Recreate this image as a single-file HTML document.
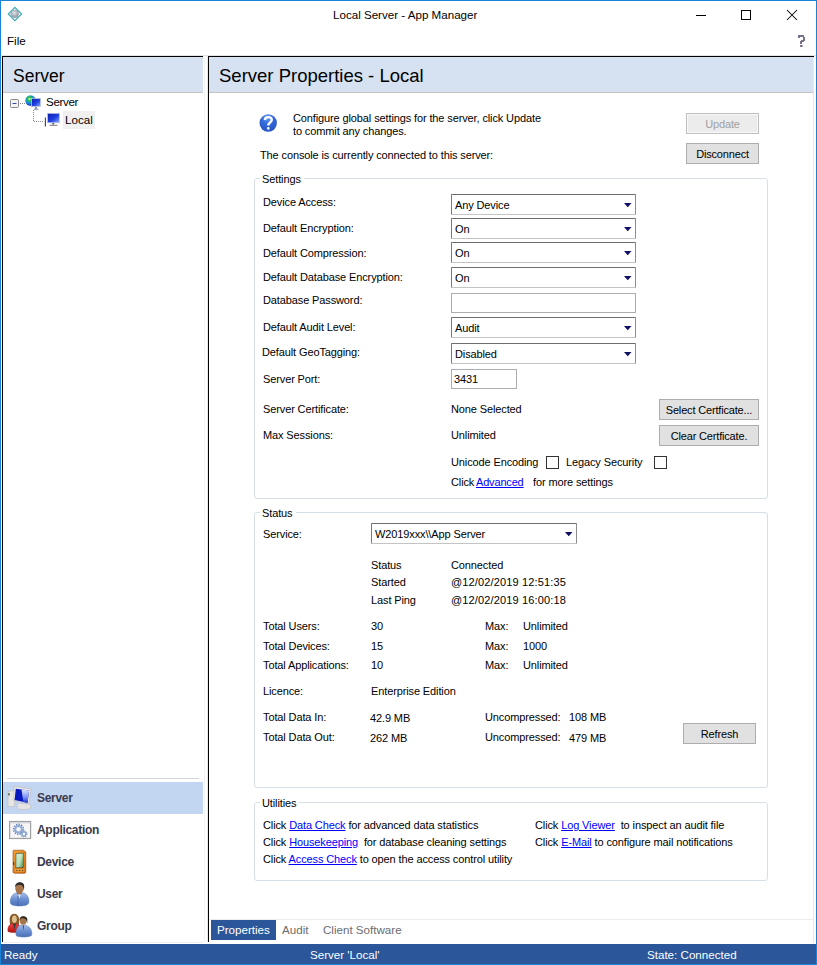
<!DOCTYPE html>
<html><head><meta charset="utf-8"><title>App Manager</title>
<style>html,body{margin:0;padding:0;width:817px;height:965px;overflow:hidden;background:#fff;font-family:'Liberation Sans', sans-serif}</style></head>
<body>
<div style="position:absolute;left:0px;top:0px;width:817px;height:965px;background:#fff"></div>
<div style="position:absolute;left:696px;top:15px;width:10px;height:1px;background:#000"></div>
<div style="position:absolute;left:741px;top:10px;width:10px;height:10px;box-sizing:border-box;border:1px solid #000"></div>
<svg style="position:absolute;left:786px;top:9px" width="12" height="12" viewBox="0 0 12 12"><path d="M1 1 L11 11 M11 1 L1 11" stroke="#000" stroke-width="1.05"/></svg>
<div style="position:absolute;left:0px;top:0px;width:817px;height:965px;box-sizing:border-box;border:1px solid #1883d7;background:transparent"></div>
<div style="position:absolute;left:1px;top:55px;width:815px;height:1px;background:#e3e3e3"></div>
<div style="position:absolute;left:2px;top:56px;width:201px;height:1px;background:#000"></div>
<div style="position:absolute;left:2px;top:56px;width:1px;height:886px;background:#000"></div>
<div style="position:absolute;left:3px;top:57px;width:200px;height:35px;background:#d6e1f1"></div>
<div style="position:absolute;left:3px;top:92px;width:200px;height:1px;background:#c4c4c4"></div>
<div style="position:absolute;left:3px;top:942px;width:200px;height:1px;background:#efefef"></div>
<div style="position:absolute;left:63px;top:111px;width:32px;height:18px;background:#f0f0f0"></div>
<div style="position:absolute;left:7px;top:778px;width:192px;height:1px;background:#d4d4d4"></div>
<div style="position:absolute;left:3px;top:782px;width:200px;height:32px;background:#c2d5f1"></div>
<div style="position:absolute;left:204px;top:56px;width:1px;height:886px;background:#f2f2f2"></div>
<div style="position:absolute;left:207px;top:56px;width:1px;height:886px;background:#e8e8e8"></div>
<div style="position:absolute;left:208px;top:56px;width:606px;height:1px;background:#000"></div>
<div style="position:absolute;left:208px;top:56px;width:1px;height:886px;background:#000"></div>
<div style="position:absolute;left:209px;top:57px;width:604px;height:35px;background:#d6e1f1"></div>
<div style="position:absolute;left:209px;top:92px;width:604px;height:1px;background:#c4c4c4"></div>
<div style="position:absolute;left:813px;top:57px;width:1px;height:886px;background:#e8e8e8"></div>
<div style="position:absolute;left:686px;top:113px;width:73px;height:21px;box-sizing:border-box;background:#ececec;border:1px solid #bfbfbf;box-shadow:inset 0 0 0 1px #f8f8f8"></div>
<div class="t" style="position:absolute;left:686px;top:113px;width:73px;height:21px;text-align:center;font:11px 'Liberation Sans', sans-serif;line-height:23px;letter-spacing:-0.17px;color:#a0a0a0">Update</div>
<div style="position:absolute;left:686px;top:143px;width:73px;height:21px;box-sizing:border-box;background:#e1e1e1;border:1px solid #adadad;"></div>
<div class="t" style="position:absolute;left:686px;top:143px;width:73px;height:21px;text-align:center;font:11px 'Liberation Sans', sans-serif;line-height:23px;letter-spacing:-0.17px;color:#000">Disconnect</div>
<div style="position:absolute;left:254px;top:178px;width:514px;height:321px;box-sizing:border-box;border:1px solid #d5dfe5;border-radius:3px"></div>
<div style="position:absolute;left:260px;top:172px;width:44px;height:12px;background:#fff"></div>
<div style="position:absolute;left:451px;top:194px;width:185px;height:21px;box-sizing:border-box;background:#fff;border:1px solid;border-color:#6e6e6e #8c8c8c #c4c4c4 #7a7a7a;border-radius:1px"></div>
<svg style="position:absolute;left:624px;top:203px" width="8" height="5" viewBox="0 0 8 5"><path d="M0 0 H7.5 L3.75 4.2 Z" fill="#101060"/></svg>
<div style="position:absolute;left:451px;top:218px;width:185px;height:21px;box-sizing:border-box;background:#fff;border:1px solid;border-color:#6e6e6e #8c8c8c #c4c4c4 #7a7a7a;border-radius:1px"></div>
<svg style="position:absolute;left:624px;top:227px" width="8" height="5" viewBox="0 0 8 5"><path d="M0 0 H7.5 L3.75 4.2 Z" fill="#101060"/></svg>
<div style="position:absolute;left:451px;top:242px;width:185px;height:21px;box-sizing:border-box;background:#fff;border:1px solid;border-color:#6e6e6e #8c8c8c #c4c4c4 #7a7a7a;border-radius:1px"></div>
<svg style="position:absolute;left:624px;top:251px" width="8" height="5" viewBox="0 0 8 5"><path d="M0 0 H7.5 L3.75 4.2 Z" fill="#101060"/></svg>
<div style="position:absolute;left:451px;top:267px;width:185px;height:21px;box-sizing:border-box;background:#fff;border:1px solid;border-color:#6e6e6e #8c8c8c #c4c4c4 #7a7a7a;border-radius:1px"></div>
<svg style="position:absolute;left:624px;top:276px" width="8" height="5" viewBox="0 0 8 5"><path d="M0 0 H7.5 L3.75 4.2 Z" fill="#101060"/></svg>
<div style="position:absolute;left:451px;top:293px;width:185px;height:20px;box-sizing:border-box;background:#fff;border:1px solid #abadb3"></div>
<div style="position:absolute;left:451px;top:317px;width:185px;height:21px;box-sizing:border-box;background:#fff;border:1px solid;border-color:#6e6e6e #8c8c8c #c4c4c4 #7a7a7a;border-radius:1px"></div>
<svg style="position:absolute;left:624px;top:326px" width="8" height="5" viewBox="0 0 8 5"><path d="M0 0 H7.5 L3.75 4.2 Z" fill="#101060"/></svg>
<div style="position:absolute;left:451px;top:343px;width:185px;height:21px;box-sizing:border-box;background:#fff;border:1px solid;border-color:#6e6e6e #8c8c8c #c4c4c4 #7a7a7a;border-radius:1px"></div>
<svg style="position:absolute;left:624px;top:352px" width="8" height="5" viewBox="0 0 8 5"><path d="M0 0 H7.5 L3.75 4.2 Z" fill="#101060"/></svg>
<div style="position:absolute;left:451px;top:369px;width:66px;height:20px;box-sizing:border-box;background:#fff;border:1px solid #abadb3"></div>
<div style="position:absolute;left:659px;top:399px;width:100px;height:21px;box-sizing:border-box;background:#e1e1e1;border:1px solid #adadad;"></div>
<div class="t" style="position:absolute;left:659px;top:399px;width:100px;height:21px;text-align:center;font:11px 'Liberation Sans', sans-serif;line-height:23px;letter-spacing:-0.17px;color:#000">Select Certficate...</div>
<div style="position:absolute;left:659px;top:425px;width:100px;height:21px;box-sizing:border-box;background:#e1e1e1;border:1px solid #adadad;"></div>
<div class="t" style="position:absolute;left:659px;top:425px;width:100px;height:21px;text-align:center;font:11px 'Liberation Sans', sans-serif;line-height:23px;letter-spacing:-0.17px;color:#000">Clear Certficate.</div>
<div style="position:absolute;left:546px;top:456px;width:13px;height:13px;box-sizing:border-box;border:1px solid #333;background:#fff"></div>
<div style="position:absolute;left:654px;top:456px;width:13px;height:13px;box-sizing:border-box;border:1px solid #333;background:#fff"></div>
<div style="position:absolute;left:254px;top:512px;width:514px;height:276px;box-sizing:border-box;border:1px solid #d5dfe5;border-radius:3px"></div>
<div style="position:absolute;left:260px;top:506px;width:36px;height:12px;background:#fff"></div>
<div style="position:absolute;left:371px;top:523px;width:206px;height:21px;box-sizing:border-box;background:#fff;border:1px solid;border-color:#6e6e6e #8c8c8c #c4c4c4 #7a7a7a;border-radius:1px"></div>
<svg style="position:absolute;left:565px;top:532px" width="8" height="5" viewBox="0 0 8 5"><path d="M0 0 H7.5 L3.75 4.2 Z" fill="#101060"/></svg>
<div style="position:absolute;left:683px;top:723px;width:73px;height:21px;box-sizing:border-box;background:#e1e1e1;border:1px solid #adadad;"></div>
<div class="t" style="position:absolute;left:683px;top:723px;width:73px;height:21px;text-align:center;font:11px 'Liberation Sans', sans-serif;line-height:23px;letter-spacing:-0.17px;color:#000">Refresh</div>
<div style="position:absolute;left:254px;top:802px;width:514px;height:79px;box-sizing:border-box;border:1px solid #d5dfe5;border-radius:3px"></div>
<div style="position:absolute;left:260px;top:796px;width:39px;height:12px;background:#fff"></div>
<div style="position:absolute;left:209px;top:919px;width:604px;height:1px;background:#ececec"></div>
<div style="position:absolute;left:211px;top:920px;width:65px;height:20px;background:#2b579a"></div>
<div style="position:absolute;left:1px;top:944px;width:815px;height:20px;background:#2b579a"></div>
<svg style="position:absolute;left:0;top:0" width="817" height="965" viewBox="0 0 817 965">
<defs>
<radialGradient id="sph" cx="0.45" cy="0.4" r="0.6"><stop offset="0" stop-color="#e6e9ec"/><stop offset="0.6" stop-color="#aab1b9"/><stop offset="1" stop-color="#8e98a2"/></radialGradient>
<radialGradient id="gl" cx="0.4" cy="0.35" r="0.65"><stop offset="0" stop-color="#e8fff0"/><stop offset="0.25" stop-color="#30c040"/><stop offset="0.6" stop-color="#1a90e0"/><stop offset="1" stop-color="#0a2ac0"/></radialGradient>
<linearGradient id="scr" x1="0" y1="0" x2="1" y2="1"><stop offset="0" stop-color="#0a1ab0"/><stop offset="0.55" stop-color="#2040e0"/><stop offset="1" stop-color="#90b0ff"/></linearGradient>
<linearGradient id="ns" x1="0" y1="0" x2="1" y2="0"><stop offset="0" stop-color="#0a20d0"/><stop offset="0.45" stop-color="#0010b0"/><stop offset="0.5" stop-color="#c8d8ff"/><stop offset="1" stop-color="#5070e0"/></linearGradient>
<linearGradient id="pda" x1="0" y1="0" x2="1" y2="1"><stop offset="0" stop-color="#f7a030"/><stop offset="1" stop-color="#d06a10"/></linearGradient>
<linearGradient id="pdas" x1="0" y1="0" x2="1" y2="1"><stop offset="0" stop-color="#e0f6e0"/><stop offset="0.5" stop-color="#a8d8a8"/><stop offset="1" stop-color="#5a9a60"/></linearGradient>
<linearGradient id="body" x1="0" y1="0" x2="0" y2="1"><stop offset="0" stop-color="#a8c0ec"/><stop offset="0.5" stop-color="#6a8ed0"/><stop offset="1" stop-color="#4a70b8"/></linearGradient>
<linearGradient id="rbody" x1="0" y1="0" x2="0" y2="1"><stop offset="0" stop-color="#f04040"/><stop offset="1" stop-color="#b01010"/></linearGradient>
<linearGradient id="hl" x1="0" y1="0" x2="0" y2="1"><stop offset="0" stop-color="#dce6ff"/><stop offset="0.6" stop-color="#7890f0"/><stop offset="1" stop-color="#1a30d0"/></linearGradient>
<radialGradient id="qg" cx="0.45" cy="0.2" r="0.9"><stop offset="0" stop-color="#6aa0ff"/><stop offset="0.4" stop-color="#3468d8"/><stop offset="1" stop-color="#2250c0"/></radialGradient>
</defs>
<!-- app icon -->
<path d="M14.9 7.4 L21.5 14 L14.9 20.6 L8.3 14 Z" fill="#fff" stroke="#3aaab8" stroke-width="1.2"/>
<circle cx="14.7" cy="13.7" r="4.2" fill="url(#sph)"/>
<!-- menu help ? -->
<path d="M798 35 H804 V37 H805 V41 H804 V42 H802 V44 H800 V41 H801 V40 H803 V37 H800 V38 H798 Z" fill="#7a7088"/>
<rect x="800" y="45" width="2.6" height="2" fill="#7a7088"/>
<!-- tree -->
<rect x="10.5" y="99.5" width="8" height="8" rx="1" fill="#f4f4f4" stroke="#8a8a8a"/>
<path d="M12.5 103.5 H16.5" stroke="#2d4ea0" stroke-width="1"/>
<path d="M20 103.5 H25" stroke="#8a8a8a" stroke-dasharray="1 1"/>
<path d="M33.5 110 V121.5 H44" stroke="#8a8a8a" stroke-dasharray="1 1" fill="none"/>
<circle cx="30.5" cy="100.5" r="5.2" fill="url(#gl)"/>
<rect x="31.5" y="98.5" width="9" height="8" fill="url(#scr)" stroke="#b8c4e0" stroke-width="0.8"/>
<rect x="35.2" y="107" width="1.6" height="2" fill="#707888"/>
<rect x="34" y="108.8" width="4.5" height="1" fill="#8090c0"/>
<!-- local monitor -->
<rect x="44.8" y="117.5" width="1.2" height="9" fill="#505050"/>
<rect x="47.5" y="113.3" width="12" height="9.5" fill="url(#scr)" stroke="#c0c8e0" stroke-width="0.8"/>
<rect x="52.2" y="123" width="2" height="1.6" fill="#606060"/>
<rect x="49.5" y="124.8" width="8" height="1.2" fill="#909090"/>
<!-- nav server -->
<path d="M8 791.5 L14.5 790.5 L14.6 806.5 L8 806.7 Z" fill="#e6e6e6" stroke="#b8b8b8" stroke-width="0.6"/>
<rect x="8.3" y="793" width="1.3" height="2.5" fill="#406040"/>
<path d="M17.5 803 L30.5 804.5 L31 808 C28 810 20 810 17 808.5 Z" fill="#e4e4e4" stroke="#b8b8b8" stroke-width="0.5"/>
<path d="M14.2 786.3 L31 789 L29.1 803.2 L13.8 800.4 Z" fill="#e8e8e8" stroke="#b8b8b8" stroke-width="0.6"/>
<path d="M15.8 788.7 L29.1 790.6 L27.5 802.8 L14.6 800 Z" fill="#0818c0"/>
<path d="M21.5 789.5 L29.1 790.6 L27.5 802.8 L23.5 802 C22.5 797 22 793 21.5 789.5 Z" fill="url(#hl)"/>
<!-- nav application -->
<rect x="9.6" y="821.5" width="21" height="17" fill="#f6f6f6" stroke="#a0a0a0" stroke-width="1.2"/>
<rect x="10.2" y="822" width="20" height="1.4" fill="#d4d8e0"/>
<circle cx="18.5" cy="829.3" r="4.9" fill="none" stroke="#6a88b8" stroke-width="1.6" stroke-dasharray="1.4 1.1"/>
<circle cx="18.5" cy="829.3" r="3.3" fill="none" stroke="#8eaad4" stroke-width="2"/>
<circle cx="23.9" cy="834" r="2.9" fill="none" stroke="#6a88b8" stroke-width="1.2" stroke-dasharray="1.1 0.9"/>
<circle cx="23.9" cy="834" r="1.9" fill="#f6f6f6" stroke="#8eaad4" stroke-width="1.3"/>
<!-- nav device -->
<path d="M13.5 850.2 H23.5 L25.8 852 V872.5 L24.6 873.3 H14.4 L13 872.5 V851 Z" fill="url(#pda)" stroke="#8a4a10" stroke-width="0.6"/>
<rect x="13.2" y="862" width="1" height="3" fill="#303030"/>
<path d="M16 853.5 L23.4 853.2 L23.2 867.5 L15.8 867.8 Z" fill="url(#pdas)" stroke="#404838" stroke-width="0.6"/>
<path d="M19 854 L22.5 854 L20 867 L16.5 867 Z" fill="#ffffff" opacity="0.25"/>
<rect x="15" y="869" width="9.5" height="2.8" rx="1" fill="#e8a040"/>
<circle cx="16.8" cy="870.4" r="0.7" fill="#604020"/><circle cx="19.7" cy="870.4" r="0.7" fill="#604020"/><circle cx="22.6" cy="870.4" r="0.7" fill="#604020"/>
<!-- nav user -->
<path d="M10.3 902.5 C10 897 13 893.2 17 892.8 L22.5 892.8 C26.5 893.2 29.2 897 28.9 902 C28.7 905 25 906 19.5 906 C14 906 10.5 905 10.3 902.5 Z" fill="url(#body)" stroke="#5a7ab8" stroke-width="0.5"/>
<path d="M18.3 894.5 L20.6 894.5 L19.5 898.5 Z" fill="#f4f4f4"/>
<path d="M18 896 V905.5" stroke="#4a68a8" stroke-width="0.7"/>
<path d="M16 891 L22.5 891 L21.5 894.3 L17.5 894.3 Z" fill="#9a6a44"/>
<ellipse cx="19.5" cy="888" rx="4.3" ry="5.4" fill="#a8764c"/>
<path d="M15.2 887 C14.5 881 24.5 880.5 24.2 886 L24 890.5 C23.5 888.5 23.2 885.5 21 885 C18.5 884.5 16.5 885 15.2 887 Z" fill="#2a2a2a"/>
<!-- nav group: woman -->
<path d="M10.2 925 C9 918.5 9.5 914 14.2 913.8 C19 914 19.8 918.5 18.8 925 Z" fill="#8a5a2a"/>
<path d="M8 931.5 C7.2 927.5 9 924.5 12 923.8 L16.5 923.8 C19.5 924.5 21 927.5 20.5 931 C17 933 11 933 8 931.5 Z" fill="url(#rbody)" stroke="#901010" stroke-width="0.4"/>
<path d="M13 923.8 L16 923.8 L14.5 929 Z" fill="#244040"/>
<ellipse cx="14.4" cy="919.3" rx="2.4" ry="3.7" fill="#dcc090"/>
<!-- nav group: man -->
<path d="M16.5 936 C15 933 16 928 19.5 925.5 L22 925 L25 925 L27.5 926 C31.5 928 32.5 933 31.5 935.5 C28.5 937.5 20 937.5 16.5 936 Z" fill="url(#body)" stroke="#5a7ab8" stroke-width="0.5"/>
<path d="M22.6 925.5 L24 925.5 L23.5 931 Z" fill="#4a4a3a"/>
<ellipse cx="23.2" cy="920.5" rx="3.5" ry="4.2" fill="#a8764c"/>
<path d="M19.6 920.5 C19 915.5 26.5 915 27.3 919 L27.3 923.5 C26.8 921.5 26.5 918.6 24 918.4 C21.7 918.1 20.3 918.6 19.6 920.5 Z" fill="#2a2a2a"/>
<!-- question circle -->
<circle cx="268.2" cy="123" r="8.7" fill="url(#qg)"/>
<path d="M264.9 120 C264.9 116.4 271.8 116.2 271.8 119.8 C271.8 122.3 268.3 122.5 268.3 125.6" fill="none" stroke="#fff" stroke-width="2.3"/>
<circle cx="268.3" cy="128.4" r="1.3" fill="#fff"/>
</svg>
<div style="position:absolute;left:0px;top:0px;width:1px;height:965px;background:#1883d7"></div>
<div style="position:absolute;left:816px;top:0px;width:1px;height:965px;background:#1883d7"></div>
<div style="position:absolute;left:0px;top:964px;width:817px;height:1px;background:#1883d7"></div>
<div style="position:absolute;left:0px;top:0px;width:817px;height:1px;background:#1883d7"></div>
<div class="t" style="position:absolute;left:333px;top:9px;font:normal 11.6px 'Liberation Sans', sans-serif;line-height:1;letter-spacing:0px;color:#000;white-space:pre;">Local Server - App Manager</div>
<div class="t" style="position:absolute;left:7px;top:35px;font:normal 11.6px 'Liberation Sans', sans-serif;line-height:1;letter-spacing:0px;color:#000;white-space:pre;">File</div>
<div class="t" style="position:absolute;left:13px;top:68px;font:normal 17.5px 'Liberation Sans', sans-serif;line-height:1;letter-spacing:0px;color:#000;white-space:pre;">Server</div>
<div class="t" style="position:absolute;left:46px;top:96px;font:normal 11.6px 'Liberation Sans', sans-serif;line-height:1;letter-spacing:-0.35px;color:#000;white-space:pre;">Server</div>
<div class="t" style="position:absolute;left:65px;top:114px;font:normal 11.6px 'Liberation Sans', sans-serif;line-height:1;letter-spacing:0px;color:#000;white-space:pre;">Local</div>
<div class="t" style="position:absolute;left:37px;top:792px;font:bold 12px 'Liberation Sans', sans-serif;line-height:1;letter-spacing:-0.3px;color:#3a3a4a;white-space:pre;">Server</div>
<div class="t" style="position:absolute;left:37px;top:824px;font:bold 12px 'Liberation Sans', sans-serif;line-height:1;letter-spacing:-0.3px;color:#3a3a4a;white-space:pre;">Application</div>
<div class="t" style="position:absolute;left:37px;top:856px;font:bold 12px 'Liberation Sans', sans-serif;line-height:1;letter-spacing:-0.3px;color:#3a3a4a;white-space:pre;">Device</div>
<div class="t" style="position:absolute;left:37px;top:888px;font:bold 12px 'Liberation Sans', sans-serif;line-height:1;letter-spacing:-0.3px;color:#3a3a4a;white-space:pre;">User</div>
<div class="t" style="position:absolute;left:37px;top:920px;font:bold 12px 'Liberation Sans', sans-serif;line-height:1;letter-spacing:-0.3px;color:#3a3a4a;white-space:pre;">Group</div>
<div class="t" style="position:absolute;left:219px;top:67px;font:normal 18.5px 'Liberation Sans', sans-serif;line-height:1;letter-spacing:0px;color:#000;white-space:pre;">Server Properties - Local</div>
<div class="t" style="position:absolute;left:293px;top:113px;font:normal 11px 'Liberation Sans', sans-serif;line-height:1;letter-spacing:-0.12px;color:#000;white-space:pre;">Configure global settings for the server, click Update</div>
<div class="t" style="position:absolute;left:293px;top:126px;font:normal 11px 'Liberation Sans', sans-serif;line-height:1;letter-spacing:-0.12px;color:#000;white-space:pre;">to commit any changes.</div>
<div class="t" style="position:absolute;left:260px;top:150px;font:normal 11px 'Liberation Sans', sans-serif;line-height:1;letter-spacing:-0.12px;color:#000;white-space:pre;">The console is currently connected to this server:</div>
<div class="t" style="position:absolute;left:262px;top:174px;font:normal 11px 'Liberation Sans', sans-serif;line-height:1;letter-spacing:-0.12px;color:#000;white-space:pre;">Settings</div>
<div class="t" style="position:absolute;left:263px;top:197px;font:normal 11px 'Liberation Sans', sans-serif;line-height:1;letter-spacing:-0.12px;color:#000;white-space:pre;">Device Access:</div>
<div class="t" style="position:absolute;left:263px;top:223px;font:normal 11px 'Liberation Sans', sans-serif;line-height:1;letter-spacing:-0.12px;color:#000;white-space:pre;">Default Encryption:</div>
<div class="t" style="position:absolute;left:263px;top:248px;font:normal 11px 'Liberation Sans', sans-serif;line-height:1;letter-spacing:-0.12px;color:#000;white-space:pre;">Default Compression:</div>
<div class="t" style="position:absolute;left:263px;top:272px;font:normal 11px 'Liberation Sans', sans-serif;line-height:1;letter-spacing:-0.12px;color:#000;white-space:pre;">Default Database Encryption:</div>
<div class="t" style="position:absolute;left:263px;top:295px;font:normal 11px 'Liberation Sans', sans-serif;line-height:1;letter-spacing:-0.12px;color:#000;white-space:pre;">Database Password:</div>
<div class="t" style="position:absolute;left:263px;top:322px;font:normal 11px 'Liberation Sans', sans-serif;line-height:1;letter-spacing:-0.12px;color:#000;white-space:pre;">Default Audit Level:</div>
<div class="t" style="position:absolute;left:262px;top:347px;font:normal 11px 'Liberation Sans', sans-serif;line-height:1;letter-spacing:-0.12px;color:#000;white-space:pre;">Default GeoTagging:</div>
<div class="t" style="position:absolute;left:263px;top:374px;font:normal 11px 'Liberation Sans', sans-serif;line-height:1;letter-spacing:-0.12px;color:#000;white-space:pre;">Server Port:</div>
<div class="t" style="position:absolute;left:263px;top:404px;font:normal 11px 'Liberation Sans', sans-serif;line-height:1;letter-spacing:-0.12px;color:#000;white-space:pre;">Server Certificate:</div>
<div class="t" style="position:absolute;left:263px;top:430px;font:normal 11px 'Liberation Sans', sans-serif;line-height:1;letter-spacing:-0.12px;color:#000;white-space:pre;">Max Sessions:</div>
<div class="t" style="position:absolute;left:455px;top:200px;font:normal 11px 'Liberation Sans', sans-serif;line-height:1;letter-spacing:-0.12px;color:#000;white-space:pre;">Any Device</div>
<div class="t" style="position:absolute;left:455px;top:224px;font:normal 11px 'Liberation Sans', sans-serif;line-height:1;letter-spacing:-0.12px;color:#000;white-space:pre;">On</div>
<div class="t" style="position:absolute;left:455px;top:248px;font:normal 11px 'Liberation Sans', sans-serif;line-height:1;letter-spacing:-0.12px;color:#000;white-space:pre;">On</div>
<div class="t" style="position:absolute;left:455px;top:273px;font:normal 11px 'Liberation Sans', sans-serif;line-height:1;letter-spacing:-0.12px;color:#000;white-space:pre;">On</div>
<div class="t" style="position:absolute;left:455px;top:323px;font:normal 11px 'Liberation Sans', sans-serif;line-height:1;letter-spacing:-0.12px;color:#000;white-space:pre;">Audit</div>
<div class="t" style="position:absolute;left:455px;top:349px;font:normal 11px 'Liberation Sans', sans-serif;line-height:1;letter-spacing:-0.12px;color:#000;white-space:pre;">Disabled</div>
<div class="t" style="position:absolute;left:454px;top:374px;font:normal 11px 'Liberation Sans', sans-serif;line-height:1;letter-spacing:-0.12px;color:#000;white-space:pre;">3431</div>
<div class="t" style="position:absolute;left:451px;top:404px;font:normal 11px 'Liberation Sans', sans-serif;line-height:1;letter-spacing:-0.12px;color:#000;white-space:pre;">None Selected</div>
<div class="t" style="position:absolute;left:451px;top:430px;font:normal 11px 'Liberation Sans', sans-serif;line-height:1;letter-spacing:-0.12px;color:#000;white-space:pre;">Unlimited</div>
<div class="t" style="position:absolute;left:451px;top:457px;font:normal 11px 'Liberation Sans', sans-serif;line-height:1;letter-spacing:-0.12px;color:#000;white-space:pre;">Unicode Encoding</div>
<div class="t" style="position:absolute;left:566px;top:457px;font:normal 11px 'Liberation Sans', sans-serif;line-height:1;letter-spacing:-0.12px;color:#000;white-space:pre;">Legacy Security</div>
<div class="t" style="position:absolute;left:451px;top:477px;font:normal 11px 'Liberation Sans', sans-serif;line-height:1;letter-spacing:-0.12px;color:#000;white-space:pre;">Click</div>
<div class="t" style="position:absolute;left:476px;top:477px;font:normal 11px 'Liberation Sans', sans-serif;line-height:1;letter-spacing:-0.17px;color:#0000ff;white-space:pre;text-decoration:underline">Advanced</div>
<div class="t" style="position:absolute;left:533px;top:477px;font:normal 11px 'Liberation Sans', sans-serif;line-height:1;letter-spacing:-0.12px;color:#000;white-space:pre;">for more settings</div>
<div class="t" style="position:absolute;left:262px;top:508px;font:normal 11px 'Liberation Sans', sans-serif;line-height:1;letter-spacing:-0.12px;color:#000;white-space:pre;">Status</div>
<div class="t" style="position:absolute;left:263px;top:529px;font:normal 11px 'Liberation Sans', sans-serif;line-height:1;letter-spacing:-0.12px;color:#000;white-space:pre;">Service:</div>
<div class="t" style="position:absolute;left:375px;top:529px;font:normal 11px 'Liberation Sans', sans-serif;line-height:1;letter-spacing:-0.12px;color:#000;white-space:pre;">W2019xxx\\App Server</div>
<div class="t" style="position:absolute;left:371px;top:560px;font:normal 11px 'Liberation Sans', sans-serif;line-height:1;letter-spacing:-0.12px;color:#000;white-space:pre;">Status</div>
<div class="t" style="position:absolute;left:451px;top:560px;font:normal 11px 'Liberation Sans', sans-serif;line-height:1;letter-spacing:-0.12px;color:#000;white-space:pre;">Connected</div>
<div class="t" style="position:absolute;left:371px;top:577px;font:normal 11px 'Liberation Sans', sans-serif;line-height:1;letter-spacing:-0.12px;color:#000;white-space:pre;">Started</div>
<div class="t" style="position:absolute;left:451px;top:577px;font:normal 11px 'Liberation Sans', sans-serif;line-height:1;letter-spacing:0.15px;color:#000;white-space:pre;">@12/02/2019 12:51:35</div>
<div class="t" style="position:absolute;left:371px;top:595px;font:normal 11px 'Liberation Sans', sans-serif;line-height:1;letter-spacing:-0.12px;color:#000;white-space:pre;">Last Ping</div>
<div class="t" style="position:absolute;left:451px;top:595px;font:normal 11px 'Liberation Sans', sans-serif;line-height:1;letter-spacing:0.15px;color:#000;white-space:pre;">@12/02/2019 16:00:18</div>
<div class="t" style="position:absolute;left:263px;top:621px;font:normal 11px 'Liberation Sans', sans-serif;line-height:1;letter-spacing:-0.12px;color:#000;white-space:pre;">Total Users:</div>
<div class="t" style="position:absolute;left:371px;top:621px;font:normal 11px 'Liberation Sans', sans-serif;line-height:1;letter-spacing:-0.12px;color:#000;white-space:pre;">30</div>
<div class="t" style="position:absolute;left:485px;top:621px;font:normal 11px 'Liberation Sans', sans-serif;line-height:1;letter-spacing:-0.12px;color:#000;white-space:pre;">Max:</div>
<div class="t" style="position:absolute;left:523px;top:621px;font:normal 11px 'Liberation Sans', sans-serif;line-height:1;letter-spacing:-0.12px;color:#000;white-space:pre;">Unlimited</div>
<div class="t" style="position:absolute;left:263px;top:641px;font:normal 11px 'Liberation Sans', sans-serif;line-height:1;letter-spacing:-0.12px;color:#000;white-space:pre;">Total Devices:</div>
<div class="t" style="position:absolute;left:371px;top:641px;font:normal 11px 'Liberation Sans', sans-serif;line-height:1;letter-spacing:-0.12px;color:#000;white-space:pre;">15</div>
<div class="t" style="position:absolute;left:485px;top:641px;font:normal 11px 'Liberation Sans', sans-serif;line-height:1;letter-spacing:-0.12px;color:#000;white-space:pre;">Max:</div>
<div class="t" style="position:absolute;left:523px;top:641px;font:normal 11px 'Liberation Sans', sans-serif;line-height:1;letter-spacing:-0.12px;color:#000;white-space:pre;">1000</div>
<div class="t" style="position:absolute;left:263px;top:660px;font:normal 11px 'Liberation Sans', sans-serif;line-height:1;letter-spacing:-0.12px;color:#000;white-space:pre;">Total Applications:</div>
<div class="t" style="position:absolute;left:371px;top:660px;font:normal 11px 'Liberation Sans', sans-serif;line-height:1;letter-spacing:-0.12px;color:#000;white-space:pre;">10</div>
<div class="t" style="position:absolute;left:485px;top:660px;font:normal 11px 'Liberation Sans', sans-serif;line-height:1;letter-spacing:-0.12px;color:#000;white-space:pre;">Max:</div>
<div class="t" style="position:absolute;left:523px;top:660px;font:normal 11px 'Liberation Sans', sans-serif;line-height:1;letter-spacing:-0.12px;color:#000;white-space:pre;">Unlimited</div>
<div class="t" style="position:absolute;left:263px;top:686px;font:normal 11px 'Liberation Sans', sans-serif;line-height:1;letter-spacing:-0.12px;color:#000;white-space:pre;">Licence:</div>
<div class="t" style="position:absolute;left:371px;top:686px;font:normal 11px 'Liberation Sans', sans-serif;line-height:1;letter-spacing:-0.12px;color:#000;white-space:pre;">Enterprise Edition</div>
<div class="t" style="position:absolute;left:263px;top:712px;font:normal 11px 'Liberation Sans', sans-serif;line-height:1;letter-spacing:-0.12px;color:#000;white-space:pre;">Total Data In:</div>
<div class="t" style="position:absolute;left:370px;top:713px;font:normal 11px 'Liberation Sans', sans-serif;line-height:1;letter-spacing:-0.12px;color:#000;white-space:pre;">42.9 MB</div>
<div class="t" style="position:absolute;left:485px;top:712px;font:normal 11px 'Liberation Sans', sans-serif;line-height:1;letter-spacing:-0.12px;color:#000;white-space:pre;">Uncompressed:</div>
<div class="t" style="position:absolute;left:569px;top:712px;font:normal 11px 'Liberation Sans', sans-serif;line-height:1;letter-spacing:-0.12px;color:#000;white-space:pre;">108 MB</div>
<div class="t" style="position:absolute;left:263px;top:732px;font:normal 11px 'Liberation Sans', sans-serif;line-height:1;letter-spacing:-0.12px;color:#000;white-space:pre;">Total Data Out:</div>
<div class="t" style="position:absolute;left:370px;top:733px;font:normal 11px 'Liberation Sans', sans-serif;line-height:1;letter-spacing:-0.12px;color:#000;white-space:pre;">262 MB</div>
<div class="t" style="position:absolute;left:485px;top:732px;font:normal 11px 'Liberation Sans', sans-serif;line-height:1;letter-spacing:-0.12px;color:#000;white-space:pre;">Uncompressed:</div>
<div class="t" style="position:absolute;left:569px;top:733px;font:normal 11px 'Liberation Sans', sans-serif;line-height:1;letter-spacing:-0.12px;color:#000;white-space:pre;">479 MB</div>
<div class="t" style="position:absolute;left:262px;top:798px;font:normal 11px 'Liberation Sans', sans-serif;line-height:1;letter-spacing:-0.12px;color:#000;white-space:pre;">Utilities</div>
<div class="t" style="position:absolute;left:263px;top:820px;font:normal 11px 'Liberation Sans', sans-serif;line-height:1;letter-spacing:-0.12px;color:#000;white-space:pre;">Click <span style="color:#0000ff;text-decoration:underline">Data Check</span> for advanced data statistics</div>
<div class="t" style="position:absolute;left:263px;top:837px;font:normal 11px 'Liberation Sans', sans-serif;line-height:1;letter-spacing:-0.12px;color:#000;white-space:pre;">Click <span style="color:#0000ff;text-decoration:underline">Housekeeping</span>&nbsp; for database cleaning settings</div>
<div class="t" style="position:absolute;left:263px;top:854px;font:normal 11px 'Liberation Sans', sans-serif;line-height:1;letter-spacing:-0.12px;color:#000;white-space:pre;">Click <span style="color:#0000ff;text-decoration:underline">Access Check</span> to open the access control utility</div>
<div class="t" style="position:absolute;left:535px;top:820px;font:normal 11px 'Liberation Sans', sans-serif;line-height:1;letter-spacing:-0.12px;color:#000;white-space:pre;">Click <span style="color:#0000ff;text-decoration:underline">Log Viewer</span>&nbsp; to inspect an audit file</div>
<div class="t" style="position:absolute;left:535px;top:837px;font:normal 11px 'Liberation Sans', sans-serif;line-height:1;letter-spacing:-0.12px;color:#000;white-space:pre;">Click <span style="color:#0000ff;text-decoration:underline">E-Mail</span> to configure mail notifications</div>
<div class="t" style="position:absolute;left:217px;top:924px;font:normal 11.6px 'Liberation Sans', sans-serif;line-height:1;letter-spacing:0px;color:#fff;white-space:pre;">Properties</div>
<div class="t" style="position:absolute;left:282px;top:924px;font:normal 11.6px 'Liberation Sans', sans-serif;line-height:1;letter-spacing:0px;color:#6d6d6d;white-space:pre;">Audit</div>
<div class="t" style="position:absolute;left:323px;top:924px;font:normal 11.6px 'Liberation Sans', sans-serif;line-height:1;letter-spacing:0px;color:#6d6d6d;white-space:pre;">Client Software</div>
<div class="t" style="position:absolute;left:4px;top:949px;font:normal 11.6px 'Liberation Sans', sans-serif;line-height:1;letter-spacing:0px;color:#fff;white-space:pre;">Ready</div>
<div class="t" style="position:absolute;left:310px;top:949px;font:normal 11.6px 'Liberation Sans', sans-serif;line-height:1;letter-spacing:0px;color:#fff;white-space:pre;">Server 'Local'</div>
<div class="t" style="position:absolute;left:647px;top:949px;font:normal 11.6px 'Liberation Sans', sans-serif;line-height:1;letter-spacing:0px;color:#fff;white-space:pre;">State: Connected</div>
</body></html>
